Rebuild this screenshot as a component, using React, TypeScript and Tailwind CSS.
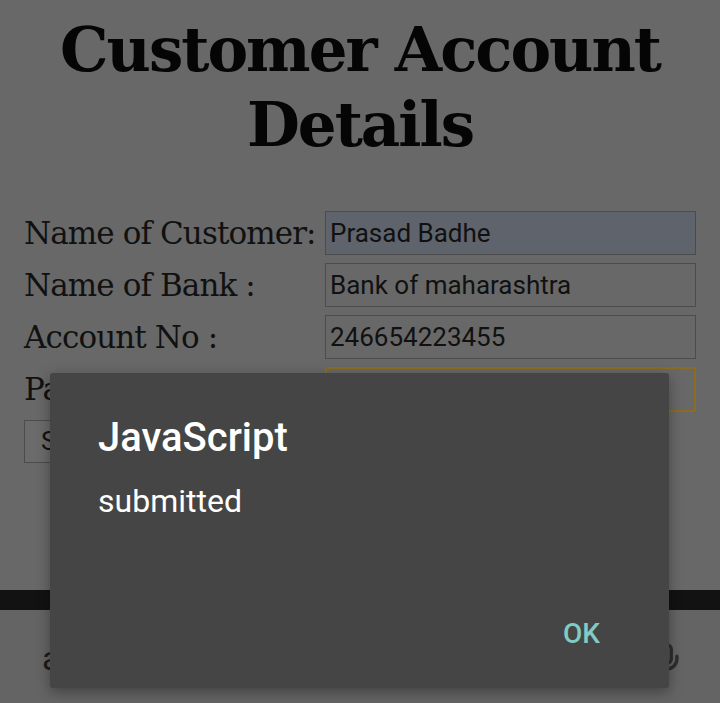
import { Mic } from 'lucide-react';

const rows = [
  { label: 'Name of Customer:', value: 'Prasad Badhe', autofill: true },
  { label: 'Name of Bank :', value: 'Bank of maharashtra' },
  { label: 'Account No :', value: '246654223455' },
];

const serif = "font-['DejaVu_Serif','Liberation_Serif',serif]";
const sans = "font-['Roboto','Liberation_Sans',sans-serif]";

const App = () => {
  return (
    <div className="relative h-[703px] w-[720px] overflow-hidden bg-[#686868]">
      {/* page under the dialog */}
      <div className="flex h-[590px] flex-col">
        <h1
          className={`${serif} mt-[12px] text-center text-[61px] leading-[75px] font-bold tracking-[-2px] text-[#050505]`}>
          Customer Account
          <br />
          Details
        </h1>

        <form className="mt-[49px] flex flex-col gap-2 pl-6 pr-6">
          {rows.map((row) => (
            <div key={row.label} className="flex items-center">
              <span
                className={`${serif} w-[301px] text-[31px] leading-[44px] tracking-[-0.9px] whitespace-nowrap text-[#111]`}>
                {row.label}
              </span>
              <div
                className={`${sans} h-[44px] w-[371px] border border-[#4c4c4c] pl-[4px] text-[26px] leading-[42px] text-[#111] ${
                  row.autofill ? 'bg-[#5f646c]' : 'bg-[#686868]'
                }`}>
                {row.value}
              </div>
            </div>
          ))}
          <div className="flex items-center">
            <span
              className={`${serif} w-[301px] text-[31px] leading-[45px] tracking-[-0.9px] text-[#111]`}>
              Password :
            </span>
            <div className="h-[45px] w-[371px] rounded-[2px] border-2 border-[#8c6d1f] bg-[#686868]" />
          </div>
          <div>
            <button
              type="button"
              className={`${sans} h-[43px] border border-[#4c4c4c] bg-[#6b6b6b] px-4 text-[26px] text-[#111]`}>
              Submit
            </button>
          </div>
        </form>
      </div>

      {/* black strip */}
      <div className="h-[20px] bg-[#121212]" />

      {/* keyboard suggestion strip */}
      <div className="flex h-[93px] items-start justify-between bg-[#646464] pl-[42px] pr-[36px]">
        <span
          className={`${sans} mt-[28px] text-[34px] leading-[40px] text-[#1c1c1c]`}>
          a
        </span>
        <Mic
          className="mt-[32px] text-[#2e2e2e]"
          size={34}
          strokeWidth={2.4}
        />
      </div>

      {/* alert dialog */}
      <div
        className={`${sans} absolute top-[373px] left-[50px] flex h-[315px] w-[619px] flex-col rounded-[3px] bg-[#454545] pt-[41px] pl-[48px] shadow-[0_4px_14px_rgba(0,0,0,0.35)]`}>
        <div className="text-[40px] leading-[48px] font-medium text-white">
          JavaScript
        </div>
        <div className="mt-[19px] text-[32px] leading-[40px] text-white">
          submitted
        </div>
        <div className="mt-auto flex justify-end pr-[69px] pb-[36px]">
          <span className="text-[28px] leading-[36px] font-medium text-[#80cbc4]">
            OK
          </span>
        </div>
      </div>
    </div>
  );
};

export default App;
